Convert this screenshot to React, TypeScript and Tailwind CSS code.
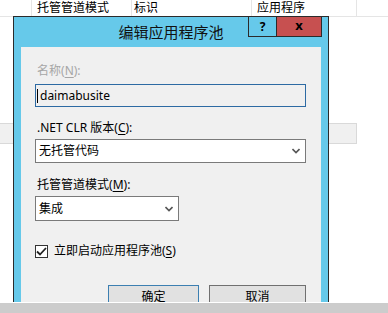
import React from 'react'

const font = { fontFamily: '"Noto Sans", "Noto Sans CJK SC", sans-serif' }

function Chevron() {
  return (
    <svg width="8" height="6" viewBox="0 0 8 6" className="shrink-0">
      <path d="M0.5 1 L4 4.5 L7.5 1" fill="none" stroke="#555" strokeWidth="1.6" />
    </svg>
  )
}

function Label({ text, mnemonic, rest, gray }: { text: string; mnemonic: string; rest?: string; gray?: boolean }) {
  return (
    <div className={`pl-[2px] text-[12px] leading-[16px] ${gray ? 'text-[#a6a6a6]' : 'text-black'}`}>
      {text}(<span className="underline underline-offset-2">{mnemonic}</span>){rest ?? ':'}
    </div>
  )
}

export default function App() {
  return (
    <div className="relative w-[388px] h-[313px] overflow-hidden bg-white" style={font}>
      {/* Background list header */}
      <div className="flex h-[17px] border-b border-[#e5e5e5] text-[12px] leading-[16px] text-black">
        <div className="w-[32px] border-r border-[#e5e5e5]" />
        <div className="w-[100px] border-r border-[#e5e5e5] pl-[5px]">托管管道模式</div>
        <div className="w-[120px] border-r border-[#e5e5e5] pl-[2px]">标识</div>
        <div className="w-[105px] border-r border-[#e5e5e5] pl-[5px]">应用程序</div>
      </div>

      {/* Background row */}
      <div className="absolute left-[-1px] top-[123px] w-[358px] h-[21px] border border-[#d9d9d9] bg-[#f0f0f0]" />

      {/* Dialog */}
      <div className="absolute left-[13px] top-[16px] w-[316px] h-[320px] border border-[#2b2b2b] bg-[#66c9ea] flex flex-col">
        <div className="relative h-[30px] flex items-center justify-center">
          <span className="text-[15px] leading-[20px] text-[#111]">编辑应用程序池</span>
          <div className="absolute top-[-1px] right-[6px] flex h-[21px]">
            <div className="w-[29px] border border-[#2b2b2b] flex items-center justify-center text-[12px] font-bold text-black">?</div>
            <div className="w-[46px] -ml-px border border-[#2b2b2b] bg-[#c75050] flex items-center justify-center text-[13px] font-bold text-black leading-none pb-[2px]">x</div>
          </div>
        </div>

        <div className="mx-[7px] flex-1 bg-[#f0f0f0] pl-[14px] pr-[15px] pt-[16px] flex flex-col">
          <Label text="名称" mnemonic="N" gray />
          <div className="mt-[5px] h-[23px] border border-[#2d6aa3] bg-[#f0f0f0] flex items-center pl-[1px] text-[12px] text-black">
            <span className="w-px h-[14px] bg-black mr-[2px]" />
            daimabusite
          </div>

          <div className="mt-[13px]">
            <Label text=".NET CLR 版本" mnemonic="C" />
          </div>
          <div className="mt-[3px] h-[24px] border border-[#7a7a7a] bg-white flex items-center justify-between pl-[3px] pr-[5px] text-[12px] text-black">
            <span>无托管代码</span>
            <Chevron />
          </div>

          <div className="mt-[14px]">
            <Label text="托管管道模式" mnemonic="M" />
          </div>
          <div className="mt-[3px] w-[144px] h-[25px] border border-[#7a7a7a] bg-white flex items-center justify-between pl-[3px] pr-[5px] text-[12px] text-black">
            <span>集成</span>
            <Chevron />
          </div>

          <div className="mt-[22px] flex items-center gap-[6px]">
            <div className="w-[13px] h-[13px] border border-[#333] bg-white flex items-center justify-center">
              <svg width="11" height="9" viewBox="0 0 11 9">
                <path d="M1 4.5 L4 7.5 L10 1" fill="none" stroke="#222" strokeWidth="1.8" />
              </svg>
            </div>
            <span className="text-[12px] leading-[16px] text-black">
              立即启动应用程序池(<span className="underline underline-offset-2">S</span>)
            </span>
          </div>

          <div className="mt-[26px] flex justify-end gap-[10px]">
            <div className="w-[91px] h-[23px] border border-[#3c7fb1] bg-[#e1e1e1] flex items-center justify-center text-[12px] text-black">确定</div>
            <div className="w-[97px] h-[23px] border border-[#707070] bg-[#e1e1e1] flex items-center justify-center text-[12px] text-black">取消</div>
          </div>
        </div>
      </div>

      {/* Bottom scrollbar strip */}
      <div className="absolute left-0 bottom-0 w-full h-[11px] border-t border-white bg-[#cccccc]" />
    </div>
  )
}
